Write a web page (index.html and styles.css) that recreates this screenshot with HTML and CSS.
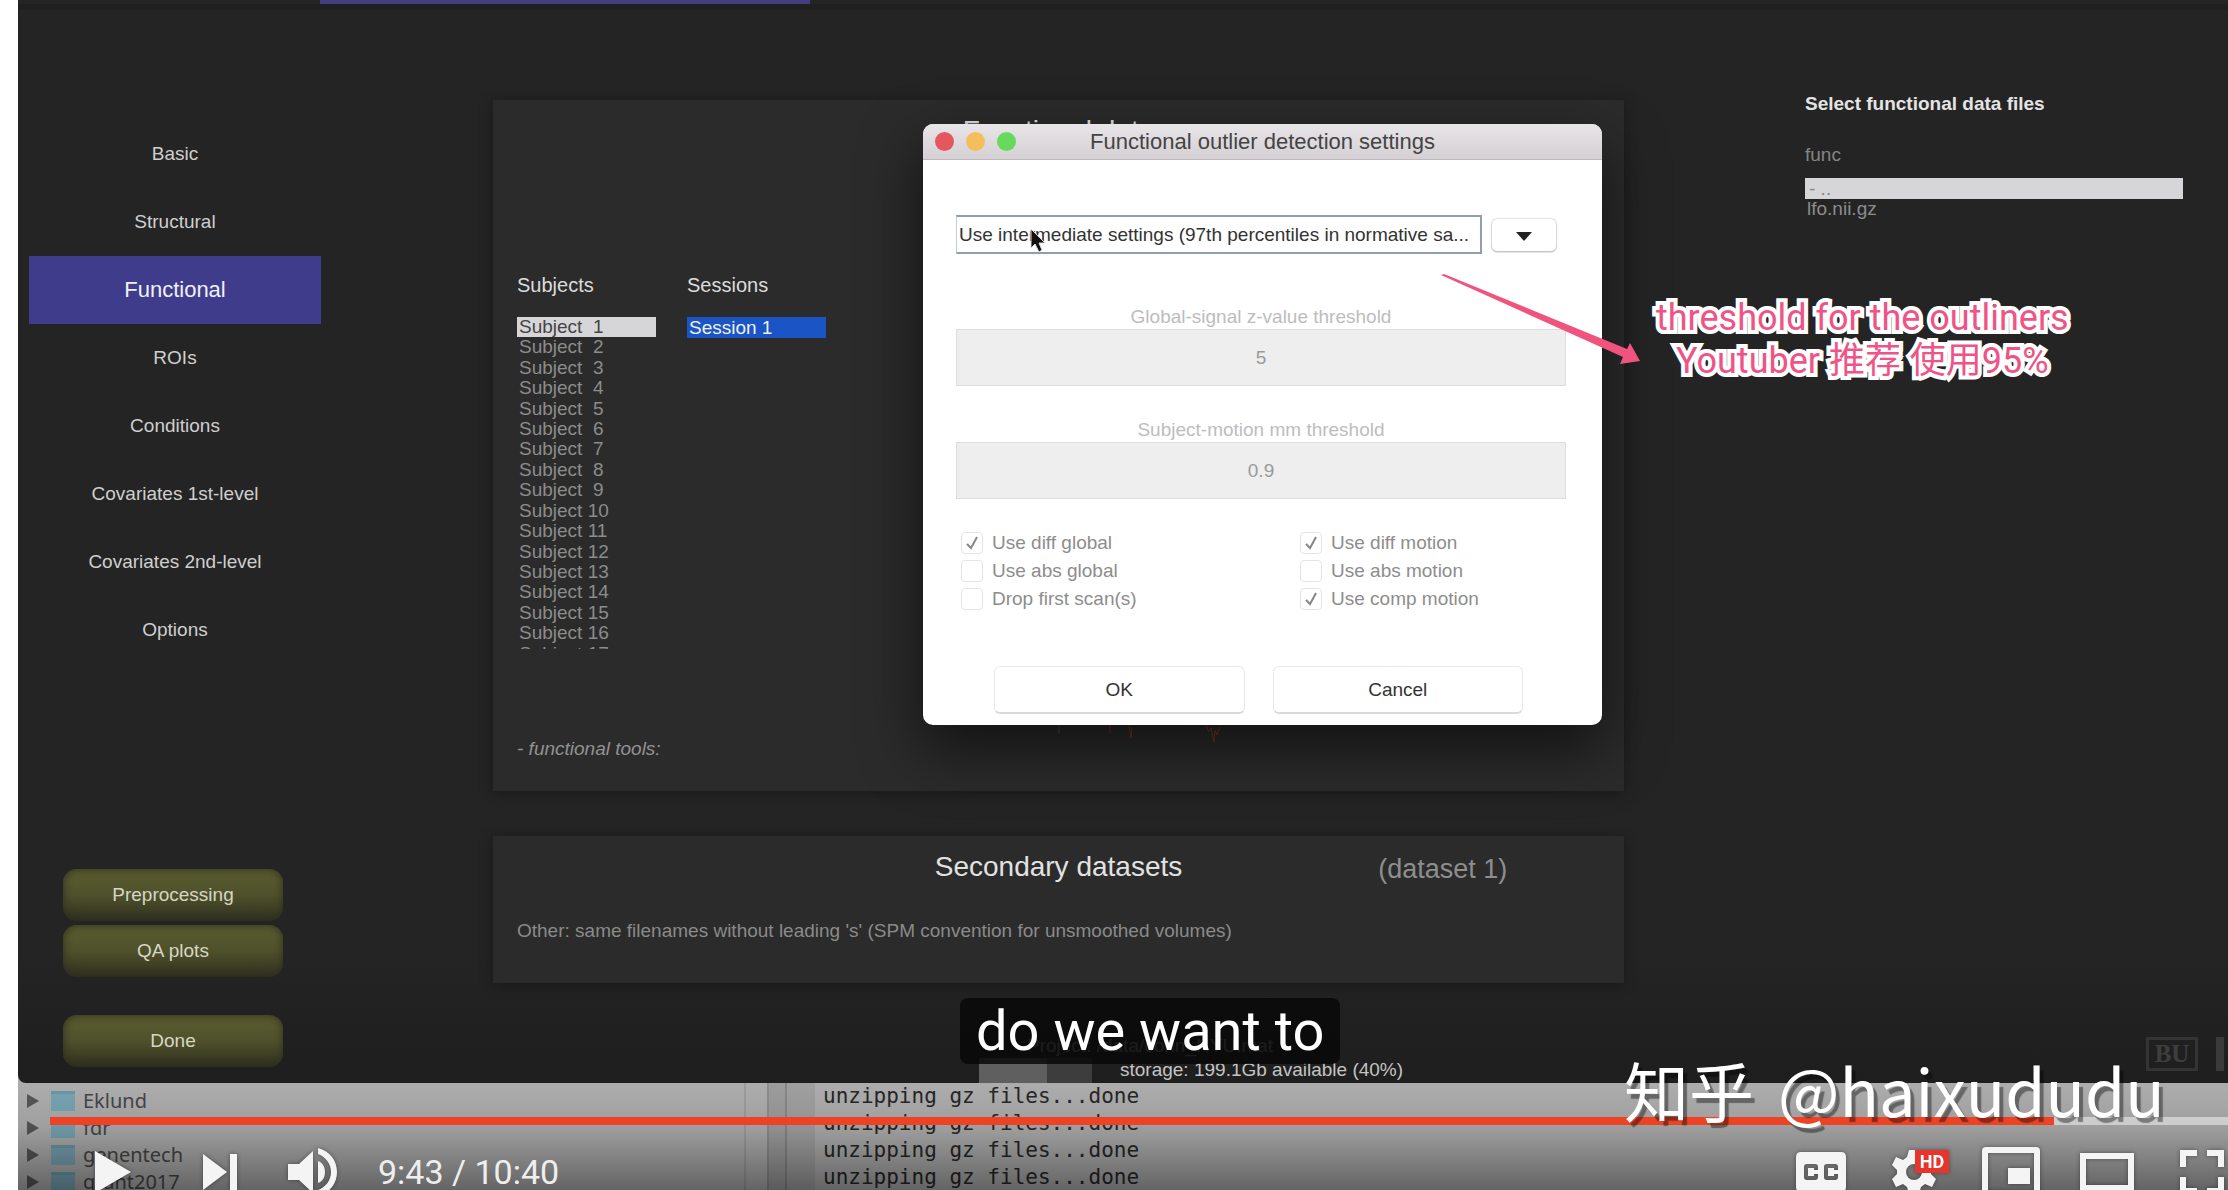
FILE: index.html
```html
<!DOCTYPE html>
<html lang="en">

<head>
    <meta charset="utf-8">
    <title>Functional outlier detection settings</title>
    <link rel="stylesheet" href="styles.css">
</head>

<body>
    <div class="player">
        <div class="app">
            <div class="topbar">
                <div class="topbar-tab"></div>
            </div>
            <div class="app-body">
                <aside class="sidebar">
                    <nav class="menu">
                        <button class="menu-item">Basic</button>
                        <button class="menu-item">Structural</button>
                        <button class="menu-item active">Functional</button>
                        <button class="menu-item">ROIs</button>
                        <button class="menu-item">Conditions</button>
                        <button class="menu-item">Covariates 1st-level</button>
                        <button class="menu-item">Covariates 2nd-level</button>
                        <button class="menu-item">Options</button>
                    </nav>
                    <div class="actions">
                        <button class="action">Preprocessing</button>
                        <button class="action">QA plots</button>
                        <button class="action action-done">Done</button>
                    </div>
                </aside>

                <main class="content">
                    <section class="panel">
                        <h2 class="panel-title">Functional data</h2>
                        <div class="lists">
                            <div class="list-col">
                                <h3>Subjects</h3>
                                <div class="list-box">
                                    <ul class="list subjects">
                                        <li class="selected">Subject  1</li>
                                        <li>Subject  2</li>
                                        <li>Subject  3</li>
                                        <li>Subject  4</li>
                                        <li>Subject  5</li>
                                        <li>Subject  6</li>
                                        <li>Subject  7</li>
                                        <li>Subject  8</li>
                                        <li>Subject  9</li>
                                        <li>Subject 10</li>
                                        <li>Subject 11</li>
                                        <li>Subject 12</li>
                                        <li>Subject 13</li>
                                        <li>Subject 14</li>
                                        <li>Subject 15</li>
                                        <li>Subject 16</li>
                                        <li>Subject 17</li>
                                    </ul>
                                </div>
                            </div>
                            <div class="list-col">
                                <h3>Sessions</h3>
                                <ul class="list">
                                    <li class="focused">Session 1</li>
                                </ul>
                            </div>
                        </div>
                        <p class="tools">- functional tools:</p>
                        <svg class="plot" width="200" height="20" viewBox="0 0 200 20" fill="none">
                            <path d="M9 0v8" stroke="#555" />
                            <path d="M60 0v8M79 0l2 13 1-11M156 0l3 7 2-4 3 14 1-12 2 5 3-8" stroke="#7d3626" />
                            <path d="M57 0l2 3M142 0v4M182 0v3" stroke="#4b2a24" />
                        </svg>
                    </section>

                    <section class="panel secondary">
                        <div class="secondary-head">
                            <h2 class="panel-title">Secondary datasets</h2>
                            <span class="dataset">(dataset 1)</span>
                        </div>
                        <p class="other">Other: same filenames without leading 's' (SPM convention for unsmoothed volumes)</p>
                    </section>

                    <div class="status">
                        <p class="project">Project: /data/conn_NYU.mat</p>
                        <div class="storage">
                            <div class="storage-bar">
                                <div class="storage-used"></div>
                            </div>
                            <span>storage: 199.1Gb available (40%)</span>
                        </div>
                    </div>
                </main>

                <aside class="files">
                    <div class="files-inner">
                        <h3>Select functional data files</h3>
                        <p class="folder">func</p>
                        <ul class="list">
                            <li class="selected">- ..</li>
                            <li>lfo.nii.gz</li>
                        </ul>
                    </div>
                    <div class="brand">
                        <span class="brand-logo">BU</span>
                        <span class="brand-bar"></span>
                    </div>
                </aside>
            </div>
        </div>

        <!-- windows behind the app -->
        <div class="desktop">
            <ul class="finder">
                <li><i class="tri"></i><i class="dir"></i>Eklund</li>
                <li><i class="tri"></i><i class="dir"></i>fdr</li>
                <li><i class="tri"></i><i class="dir"></i>genentech</li>
                <li><i class="tri"></i><i class="dir"></i>grant2017</li>
            </ul>
            <div class="scroller"></div>
            <div class="gutter"></div>
            <pre class="console">unzipping gz files...done
unzipping gz files...done
unzipping gz files...done
unzipping gz files...done</pre>
        </div>

        <!-- dialog -->
        <form class="dialog">
            <header class="dialog-head">
                <div class="lights"><i class="red"></i><i class="yellow"></i><i class="green"></i></div>
                <h1>Functional outlier detection settings</h1>
            </header>
            <div class="dialog-body">
                <div class="preset">
                    <select class="preset-select" aria-label="Settings">
                        <option>Use intermediate settings (97th percentiles in normative sa...</option>
                    </select>
                    <button type="button" class="preset-open" aria-label="Open list">
                        <svg width="16" height="9" viewBox="0 0 16 9"><path d="M0 0h16L8 9z" fill="#222" /></svg>
                    </button>
                </div>
                <label class="field-label" for="global">Global-signal z-value threshold</label>
                <input class="field" id="global" type="text" value="5" disabled>
                <label class="field-label" for="motion">Subject-motion mm threshold</label>
                <input class="field" id="motion" type="text" value="0.9" disabled>
                <div class="checks">
                    <label><input type="checkbox" checked disabled>Use diff global</label>
                    <label><input type="checkbox" checked disabled>Use diff motion</label>
                    <label><input type="checkbox" disabled>Use abs global</label>
                    <label><input type="checkbox" disabled>Use abs motion</label>
                    <label><input type="checkbox" disabled>Drop first scan(s)</label>
                    <label><input type="checkbox" checked disabled>Use comp motion</label>
                </div>
                <div class="dialog-buttons">
                    <button type="button">OK</button>
                    <button type="button">Cancel</button>
                </div>
            </div>
        </form>
        <svg class="cursor" width="16" height="26" viewBox="0 0 16 26">
            <path d="M1 1v19l4-4 4 8 3-2-3-7h6z" fill="#111" stroke="#ddd" />
        </svg>

        <!-- note -->
        <svg class="arrow" width="202" height="92" viewBox="0 0 202 92">
            <path d="M1 1L4 0 187 75 190 69 200 87 180 90 183 83z" fill="#f0547e" />
        </svg>
        <p class="note">threshold for the outliners<br>Youtuber 推荐 使用95%</p>

        <div class="caption">do we want to</div>

        <!-- video controls -->
        <div class="controls">
            <div class="progress">
                <div class="progress-played"></div>
            </div>
            <div class="controls-row">
                <button class="ctl play" aria-label="Play">
                    <svg width="36" height="42" viewBox="0 0 36 42"><path d="M0 0l36 21L0 42z" /></svg>
                </button>
                <button class="ctl next" aria-label="Next">
                    <svg width="34" height="36" viewBox="0 0 34 36"><path d="M0 0l24 18L0 36zM27 0h7v36h-7z" /></svg>
                </button>
                <button class="ctl volume" aria-label="Mute">
                    <svg width="50" height="50" viewBox="0 0 50 50">
                        <path d="M0 17h11L25 4v42L11 33H0zM30 14c5 2 7 6 7 11s-2 9-7 11z" />
                        <path d="M30 1c12 3 19 13 19 24s-7 21-19 24v-6c8-3 13-10 13-18S38 10 30 7z" />
                    </svg>
                </button>
                <span class="time">9:43 / 10:40</span>
                <div class="controls-right">
                    <button class="ctl" aria-label="Subtitles">
                        <svg width="50" height="40" viewBox="0 0 50 40">
                            <path fill-rule="evenodd"
                                d="M5 0h40q5 0 5 5v30q0 5-5 5H5q-5 0-5-5V5q0-5 5-5zM11 12q-3 0-3 3v10q0 3 3 3h8q3 0 3-3v-3h-4v2h-6v-8h6v2h4v-3q0-3-3-3zM31 12q-3 0-3 3v10q0 3 3 3h8q3 0 3-3v-3h-4v2h-6v-8h6v2h4v-3q0-3-3-3z" />
                        </svg>
                    </button>
                    <button class="ctl settings" aria-label="Settings">
                        <svg width="44" height="44" viewBox="0 0 44 44">
                            <path fill-rule="evenodd"
                                d="M17 0h10l2 7 4 3 7-3 4 8-5 5v4l5 5-4 8-7-3-4 3-2 7H17l-2-7-4-3-7 3-4-8 5-5v-4l-5-5 4-8 7 3 4-3zM22 14a8 8 0 1 0 0 16 8 8 0 1 0 0-16z" />
                        </svg>
                        <span class="hd">HD</span>
                    </button>
                    <button class="ctl" aria-label="Miniplayer">
                        <svg width="58" height="50" viewBox="0 0 58 50">
                            <path fill-rule="evenodd" d="M4 0h50q4 0 4 4v46H0V4q0-4 4-4zM6 6v38h46V6zM26 21h22v16H26z" />
                        </svg>
                    </button>
                    <button class="ctl theater" aria-label="Theater mode">
                        <svg width="54" height="38" viewBox="0 0 54 38">
                            <path fill-rule="evenodd" d="M0 0h54v38H0zM6 6v26h42V6z" />
                        </svg>
                    </button>
                    <button class="ctl" aria-label="Full screen">
                        <svg width="44" height="44" viewBox="0 0 44 44">
                            <path d="M0 0h17v6H6v11H0zM27 0h17v17h-6V6H27zM0 27h6v11h11v6H0zM38 27h6v17H27v-6h11z" />
                        </svg>
                    </button>
                </div>
            </div>
        </div>

        <div class="watermark"><span>知乎</span><span>@haixududu</span></div>
    </div>
</body>

</html>
```

FILE: styles.css
```css
* {
    box-sizing: border-box;
}

body {
    margin: 0;
    padding-left: 18px;
    background: #ffffff;
    font-family: "Liberation Sans", Arial, sans-serif;
    font-size: 19px;
    line-height: 24px;
}

h1,
h2,
h3,
p,
ul,
pre {
    margin: 0;
    padding: 0;
    font-weight: normal;
}

ul {
    list-style: none;
}

button,
input,
select {
    font-family: inherit;
    font-size: 19px;
}

button {
    border: none;
    padding: 0;
    background: none;
}

.player {
    position: relative;
    height: 100vh;
    overflow: hidden;
    background: #acacac;
}

/* app */
.app {
    background: linear-gradient(#242424 88%, #1e1e1e);
    border-radius: 0 0 0 8px;
    color: #d2d2d2;
}

.topbar {
    height: 10px;
    border-bottom: 6px solid #1f1f1f;
}

.topbar-tab {
    width: 490px;
    height: 4px;
    margin-left: 302px;
    background: #433d80;
}

.app-body {
    display: grid;
    grid-template-columns: 475px 1fr 604px;
}

.sidebar {
    padding: 110px 0 12px 11px;
}

.menu {
    width: 292px;
    display: flex;
    flex-direction: column;
}

.menu-item {
    height: 68px;
    color: #cfcfcf;
}

.menu-item.active {
    background: #3f3c8b;
    color: #f0f0f8;
    font-size: 22px;
}

.actions {
    width: 220px;
    margin: 205px 0 0 34px;
    display: flex;
    flex-direction: column;
    gap: 4px;
}

.action {
    height: 52px;
    border-radius: 14px;
    background: linear-gradient(#5a5c2f, #4f512b 50%, #2f301f);
    box-shadow: inset 0 0 8px #2c2d1e;
    color: #d6d6c4;
}

.action-done {
    margin-top: 34px;
}

.content {
    padding-top: 90px;
}

.panel {
    position: relative;
    padding: 15px 24px 30px;
    background: #2b2b2b;
    box-shadow: 0 2px 10px #191919;
}

.panel-title {
    font-size: 28px;
    line-height: 32px;
    text-align: center;
    color: #e2e2e2;
}

.lists {
    display: flex;
    gap: 31px;
    margin-top: 126px;
}

.list-col {
    width: 139px;
}

.list-col h3 {
    margin-bottom: 20px;
    font-size: 20px;
    color: #dcdcdc;
}

.list-box {
    height: 332px;
    overflow: hidden;
}

.list li {
    padding-left: 2px;
    line-height: 20px;
    white-space: pre;
    color: #8c8c8c;
}

.subjects {
    display: grid;
    grid-template-rows: repeat(17, 1fr);
    height: 347px;
}

.list .selected {
    background: #d6d6d8;
    color: #444444;
}

.list .focused {
    line-height: 21px;
    background: #1b54c4;
    color: #f0f0f0;
}

.tools {
    margin-top: 88px;
    font-style: italic;
    color: #929292;
}

.plot {
    position: absolute;
    left: 557px;
    top: 625px;
}

.secondary {
    margin-top: 45px;
    padding-bottom: 40px;
}

.secondary-head {
    display: grid;
    grid-template-columns: 1fr auto 1fr;
}

.secondary-head .panel-title {
    grid-column: 2;
}

.dataset {
    padding-left: 196px;
    font-size: 27px;
    line-height: 36px;
    color: #8e8e8e;
}

.other {
    margin-top: 32px;
    color: #8a8a8a;
}

.status {
    padding-top: 51px;
}

.project {
    padding-left: 534px;
    color: #909090;
}

.storage {
    display: flex;
    gap: 28px;
    height: 25px;
    padding-left: 486px;
    color: #c4c4c4;
}

.storage-bar {
    width: 113px;
    background: #3d3d3d;
}

.storage-used {
    width: 60%;
    height: 100%;
    background: #5f5f5f;
}

.files {
    display: flex;
    flex-direction: column;
    justify-content: space-between;
    padding: 82px 4px 12px 181px;
}

.files h3 {
    font-size: 19px;
    font-weight: bold;
    color: #e4e4e4;
}

.folder {
    margin: 27px 0 11px;
    color: #858585;
}

.files .list {
    width: 378px;
}

.files .selected {
    line-height: 21px;
}

.files-inner .selected {
    padding-left: 4px;
    color: #888888;
}

.brand {
    display: flex;
    justify-content: flex-end;
    gap: 18px;
}

.brand-logo {
    width: 52px;
    border: 3px solid #343434;
    font: bold 25px/28px "Liberation Serif", serif;
    text-align: center;
    color: #3e3e3e;
}

.brand-bar {
    width: 8px;
    background: #3a3a3a;
}

/* desktop behind */
.desktop {
    display: flex;
}

.finder {
    width: 728px;
    padding: 4px 0 0 9px;
    border-right: 2px solid #9c9c9c;
    font-family: "Noto Sans", sans-serif;
    font-size: 20px;
    line-height: 27px;
    color: #454545;
}

.finder li {
    display: flex;
    align-items: center;
}

.tri {
    border-left: 12px solid #555555;
    border-top: 7px solid transparent;
    border-bottom: 7px solid transparent;
}

.dir {
    width: 24px;
    height: 20px;
    margin: 0 8px 0 12px;
    border-top: 3px solid #6a97a5;
    background: #76a3b2;
}

.scroller {
    width: 21px;
}

.gutter {
    width: 48px;
    border-left: 2px solid #8c8c8c;
    background: linear-gradient(to right, #9c9c9c 16px, #868686 16px, #868686 18px, #9f9f9f 18px);
}

.console {
    padding-left: 8px;
    font: 21px/27px "DejaVu Sans Mono", monospace;
    color: #262626;
}

/* dialog */
.dialog {
    position: absolute;
    left: 905px;
    top: 124px;
    width: 679px;
    border-radius: 10px;
    overflow: hidden;
    background: #ffffff;
    box-shadow: 0 24px 60px rgba(0, 0, 0, 0.6);
}

.dialog-head {
    display: grid;
    grid-template-columns: 1fr auto 1fr;
    align-items: center;
    height: 36px;
    border-bottom: 1px solid #bdb9bd;
    background: linear-gradient(#e8e5e9, #d4d0d4);
}

.dialog-head h1 {
    font-size: 22px;
    line-height: 28px;
    color: #444444;
}

.lights {
    display: flex;
    gap: 12px;
    padding-left: 12px;
}

.lights i {
    width: 19px;
    height: 19px;
    border-radius: 50%;
}

.red {
    background: #e4575f;
}

.yellow {
    background: #f2bf5a;
}

.green {
    background: #67d95c;
}

.dialog-body {
    padding: 55px 36px 11px 33px;
}

.preset {
    display: flex;
    align-items: center;
    gap: 10px;
    margin-bottom: 51px;
}

.preset-select {
    appearance: none;
    width: 526px;
    height: 39px;
    padding: 0 2px;
    border: 2px solid #8e9fb0;
    border-left: 1px solid #c5ccd4;
    border-radius: 0;
    background: #ffffff;
    color: #333333;
}

.preset-open {
    width: 64px;
    height: 32px;
    border-radius: 5px;
    background: #ffffff;
    box-shadow: 0 0 2px #aaaaaa, 0 1px 2px #bbbbbb;
}

.field-label {
    display: block;
    text-align: center;
    color: #bdbdbd;
}

.field {
    display: block;
    width: 100%;
    height: 57px;
    margin-bottom: 32px;
    border: 1px solid #dedede;
    background: #eeeeee;
    text-align: center;
    color: #9a9a9a;
}

.checks {
    display: grid;
    grid-template-columns: 339px 1fr;
    row-gap: 4px;
    padding-left: 5px;
    margin-bottom: 55px;
    color: #8d8d8d;
}

.checks label {
    display: flex;
    align-items: center;
    gap: 9px;
}

.checks input {
    appearance: none;
    width: 22px;
    height: 22px;
    margin: 0;
    border: 1px solid #e4e4e4;
    border-radius: 4px;
    background: #ffffff;
}

.checks input:checked {
    background: url("data:image/svg+xml,%3Csvg xmlns='http://www.w3.org/2000/svg' viewBox='0 0 20 20'%3E%3Cpath d='M5 11l4 4 6-11' fill='none' stroke='%23888' stroke-width='2'/%3E%3C/svg%3E");
}

.dialog-buttons {
    display: flex;
    gap: 28px;
    padding: 0 43px 0 38px;
}

.dialog-buttons button {
    flex: 1;
    height: 48px;
    border: 1px solid #e8e8e8;
    border-bottom: 2px solid #dadada;
    border-radius: 6px;
    color: #333333;
}

.cursor {
    position: absolute;
    left: 1012px;
    top: 228px;
}

/* note on top of the video */
.arrow {
    position: absolute;
    left: 1422px;
    top: 274px;
}

.note {
    position: absolute;
    left: 1638px;
    top: 297px;
    font-family: Roboto, "Noto Sans CJK SC", sans-serif;
    font-size: 36px;
    line-height: 43px;
    text-align: center;
    white-space: nowrap;
    color: #ee5485;
    -webkit-text-stroke: 8px #ffffff;
    paint-order: stroke fill;
}

.caption {
    position: absolute;
    left: 942px;
    top: 998px;
    padding: 0 16px;
    border-radius: 8px;
    background: rgba(8, 8, 8, 0.85);
    font-family: Roboto, sans-serif;
    font-size: 56px;
    line-height: 66px;
    color: #ffffff;
}

/* video controls */
.controls {
    position: absolute;
    left: 0;
    right: 0;
    bottom: 0;
    height: 105px;
    padding-top: 32px;
    background: linear-gradient(rgba(0, 0, 0, 0), rgba(0, 0, 0, 0.08) 40%, rgba(0, 0, 0, 0.42));
}

.progress {
    height: 8px;
    margin-left: 32px;
    background: #cdcdcd;
}

.progress-played {
    width: 92%;
    height: 100%;
    background: #ee4224;
}

.controls-row {
    display: flex;
    align-items: center;
    height: 94px;
    padding: 0 4px 0 77px;
}

.ctl {
    display: flex;
    position: relative;
    filter: drop-shadow(0 0 2px rgba(0, 0, 0, 0.4));
}

.ctl svg {
    fill: #f4f4f4;
}

.next {
    margin-left: 72px;
}

.volume {
    margin-left: 51px;
}

.time {
    margin-left: 40px;
    font-family: Roboto, sans-serif;
    font-size: 34px;
    color: #eeeeee;
}

.controls-right {
    display: flex;
    align-items: center;
    gap: 46px;
    margin-left: auto;
}

.theater {
    margin-left: -6px;
}

.hd {
    position: absolute;
    left: 23px;
    top: 0;
    width: 34px;
    background: #e5352d;
    font: bold 18px/23px Roboto, sans-serif;
    text-align: center;
    color: #ffffff;
}

.watermark {
    position: absolute;
    left: 1606px;
    top: 1043px;
    display: flex;
    gap: 24px;
    font-family: "Noto Sans CJK SC", sans-serif;
    font-size: 65px;
    line-height: 92px;
    color: #ffffff;
    text-shadow: 4px 5px 1px rgba(0, 0, 0, 0.4);
}
```
